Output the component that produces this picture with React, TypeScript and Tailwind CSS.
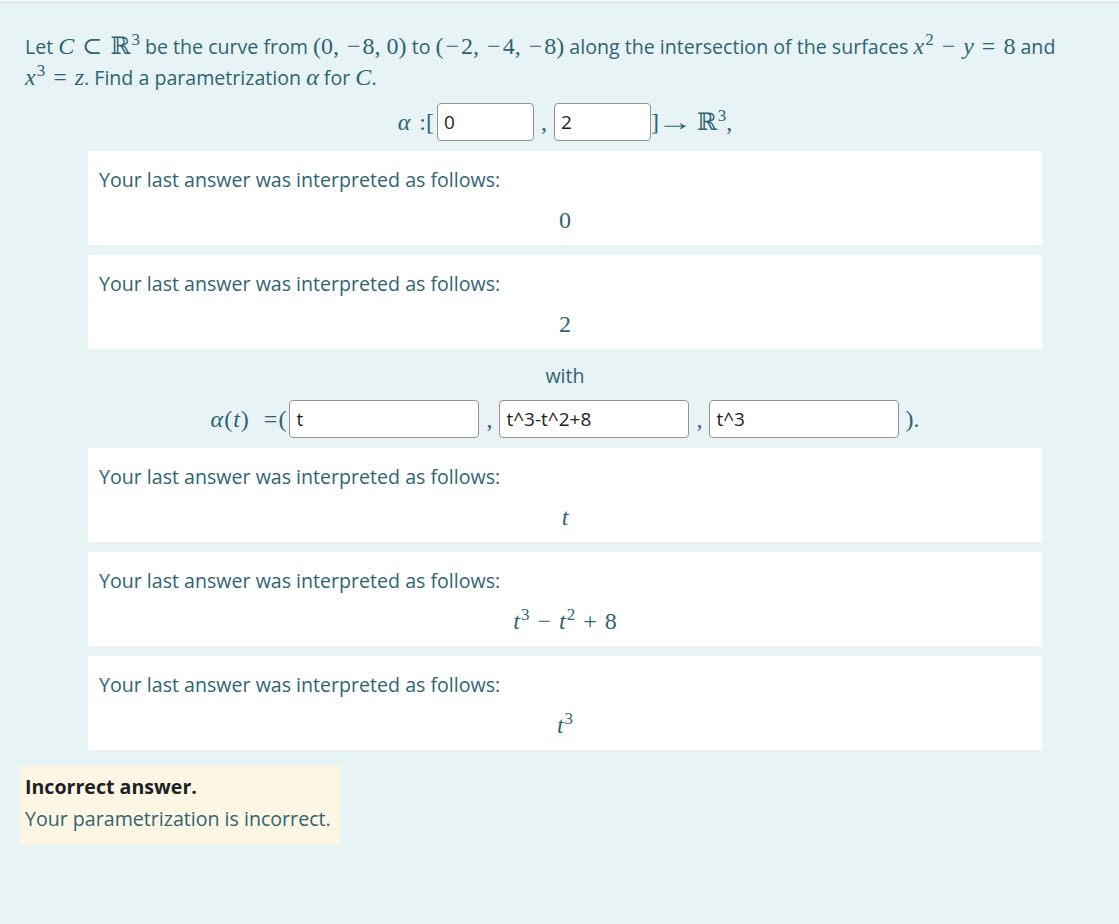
const SANS = "font-['Open_Sans',_'Noto_Sans',_sans-serif]"
const SERIF = "font-['Liberation_Serif',_'DejaVu_Serif',_serif]"

function V({ children }: { children: React.ReactNode }) {
  return <span className={`${SERIF} italic`}>{children}</span>
}

function M({ children, className = "" }: { children: React.ReactNode; className?: string }) {
  return <span className={`${SERIF} text-[24px] leading-none ${className}`}>{children}</span>
}

function Sup({ children }: { children: React.ReactNode }) {
  return <sup className="ml-[1px] text-[17px] top-[-0.55em]">{children}</sup>
}

// binary operator / relation with MathJax-like spacing
function Op({ children }: { children: React.ReactNode }) {
  return <span className="px-[8px]">{children}</span>
}

// comma followed by a thin space
function Comma() {
  return <span className="mr-[6px]">,</span>
}

// unary minus, a bit wider like TeX's
function Neg() {
  return <span className="px-[2px]">−</span>
}

function Field({ value, width }: { value: string; width: string }) {
  return (
    <input
      readOnly
      value={value}
      className={`${SANS} ${width} h-[38px] rounded-[4px] border border-[#8f959e] bg-white px-[6px] text-[19px] text-[#1d2125] outline-none`}
    />
  )
}

function Interpreted({ children }: { children: React.ReactNode }) {
  return (
    <div className="mx-[68px] h-[94px] bg-white px-[11px] pt-[14px]">
      <div className="leading-[30px]">Your last answer was interpreted as follows:</div>
      <div className="mt-[10px] flex h-[30px] items-center justify-center text-[#2f6473]">{children}</div>
    </div>
  )
}

export default function App() {
  return (
    <div className={`${SANS} min-h-[924px] bg-[#e7f3f5] text-[19.6px] text-[#2f6473]`}>
      <div className="h-[3px] bg-[#f2f5f6] border-b border-[#d4e3e7]" />
      <div className="pl-5 pr-[9px] pt-[28px]">
        <p className="pl-[5px] leading-[31px]">
          Let <M><V>C</V><Op>⊂</Op>ℝ<Sup>3</Sup></M> be the curve from{" "}
          <M>(0<Comma /><Neg />8<Comma />0)</M> to <M>(<Neg />2<Comma /><Neg />4<Comma /><Neg />8)</M> along the
          intersection of the surfaces{" "}
          <M><V>x</V><Sup>2</Sup><Op>−</Op><V>y</V><Op>=</Op>8</M> and{" "}
          <M><V>x</V><Sup>3</Sup><Op>=</Op><V>z</V></M>. Find a parametrization{" "}
          <M><V>α</V></M> for <M><V>C</V></M>.
        </p>

        <div className="mt-[10px] flex items-center justify-center">
          <M className="mr-[3px]"><V>α</V> <span className="ml-[3px]">:[</span></M>
          <Field value="0" width="w-[97px]" />
          <M className="mx-[7px]">,</M>
          <Field value="2" width="w-[97px]" />
          <M>]<span className="inline-block scale-x-[1.5] px-[4px]">→</span> ℝ<Sup>3</Sup>,</M>
        </div>

        <div className="mt-[10px] flex flex-col gap-[10px]">
          <Interpreted><M>0</M></Interpreted>
          <Interpreted><M>2</M></Interpreted>
        </div>

        <div className="mt-[12px] text-center leading-[30px]">with</div>

        <div className="mt-[9px] flex items-center justify-center">
          <M className="mr-[3px]">
            <V>α</V><span className="px-[1px]">(</span><V>t</V><span className="px-[1px]">)</span>
            <span className="pl-[14px] pr-[1px]">=</span>(
          </M>
          <Field value="t" width="w-[190px]" />
          <M className="mx-[7px]">,</M>
          <Field value="t^3-t^2+8" width="w-[190px]" />
          <M className="mx-[7px]">,</M>
          <Field value="t^3" width="w-[190px]" />
          <M className="ml-[6px]">).</M>
        </div>

        <div className="mt-[10px] flex flex-col gap-[10px]">
          <Interpreted><M><V>t</V></M></Interpreted>
          <Interpreted>
            <M><V>t</V><Sup>3</Sup><Op>−</Op><V>t</V><Sup>2</Sup><Op>+</Op>8</M>
          </Interpreted>
          <Interpreted><M><V>t</V><Sup>3</Sup></M></Interpreted>
        </div>

        <div className="mt-[16px] w-[320px] bg-[#fcf6e3] px-[5px] pt-[6px] pb-[11px] whitespace-nowrap">
          <div className="font-bold leading-[30px] text-[#1d2125]">Incorrect answer.</div>
          <div className="mt-[2px] leading-[30px]">Your parametrization is incorrect.</div>
        </div>
      </div>
    </div>
  )
}
